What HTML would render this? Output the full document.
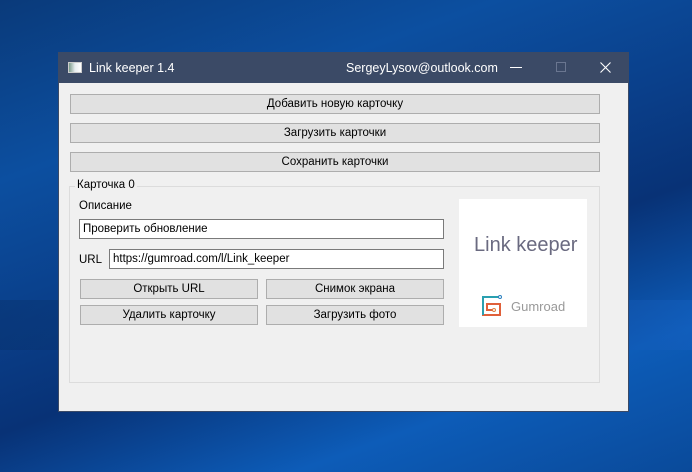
<!DOCTYPE html>
<html><head><meta charset="utf-8"><style>
*{margin:0;padding:0;box-sizing:border-box}
body{width:692px;height:472px;overflow:hidden;position:relative;font-family:"Liberation Sans",sans-serif;font-size:12px;color:#000;
background:linear-gradient(160deg,#0a3a7a 0%,#0c4fa0 25%,#0a3f8a 45%,#083276 60%,#0d5cb8 80%,#0a4a9a 100%);}
.ray{position:absolute;left:0;top:300px;width:692px;height:50px;background:linear-gradient(90deg,#08306a,#0a3f88 50%,#1660c0);opacity:.45}
.win{position:absolute;left:58px;top:52px;width:571px;height:360px;background:#f0f0f0;border:1px solid #3b4a66}
.tb{position:absolute;left:0;top:0;width:100%;height:30px;background:#3b4a66;color:#fff;font-size:12.5px}
.tb span{position:absolute;top:8px}
.b{position:absolute;background:#e1e1e1;border:1px solid #adadad;text-align:center;line-height:18px;font-size:11.5px}
.in{position:absolute;background:#fff;border:1px solid #7a7a7a;line-height:18px;padding-left:3px;font-size:11.5px}
.t{position:absolute;font-size:11.5px}
</style></head><body>
<div class="ray"></div>
<div class="win">
 <div class="tb">
  <div style="position:absolute;left:9px;top:9px;width:14px;height:11px;background:linear-gradient(90deg,#7a9a8a,#e8eef0 50%,#fff);border:1px solid #ccc"></div>
  <span style="left:30px">Link keeper 1.4</span>
  <span style="left:287px">SergeyLysov@outlook.com</span>
  <div style="position:absolute;left:451px;top:14px;width:12px;height:1px;background:#fff"></div>
  <div style="position:absolute;left:497px;top:9px;width:10px;height:10px;border:1px solid #6a7690"></div>
  <svg style="position:absolute;left:541px;top:9px" width="11" height="11" viewBox="0 0 11 11"><path d="M0.5 0.5L10.5 10.5M10.5 0.5L0.5 10.5" stroke="#fff" stroke-width="1.1"/></svg>
 </div>
 <div class="b" style="left:11px;top:41px;width:530px;height:20px">Добавить новую карточку</div>
 <div class="b" style="left:11px;top:70px;width:530px;height:20px">Загрузить карточки</div>
 <div class="b" style="left:11px;top:99px;width:530px;height:20px">Сохранить карточки</div>
 <div style="position:absolute;left:10px;top:133px;width:531px;height:197px;border:1px solid #dcdcdc"></div>
 <div class="t" style="left:16px;top:126px;background:#f0f0f0;padding:0 2px">Карточка 0</div>
 <div class="t" style="left:20px;top:147px">Описание</div>
 <div class="in" style="left:20px;top:166px;width:365px;height:20px">Проверить обновление</div>
 <div class="t" style="left:20px;top:201px">URL</div>
 <div class="in" style="left:50px;top:196px;width:335px;height:20px">https://gumroad.com/l/Link_keeper</div>
 <div class="b" style="left:21px;top:226px;width:178px;height:20px">Открыть URL</div>
 <div class="b" style="left:207px;top:226px;width:178px;height:20px">Снимок экрана</div>
 <div class="b" style="left:21px;top:252px;width:178px;height:20px">Удалить карточку</div>
 <div class="b" style="left:207px;top:252px;width:178px;height:20px">Загрузить фото</div>
 <div style="position:absolute;left:400px;top:146px;width:128px;height:128px;background:#fff">
  <div style="position:absolute;left:15px;top:35px;font-size:20px;color:#6a6a80">Link keeper</div>
  <svg style="position:absolute;left:22px;top:96px" width="22" height="22" viewBox="0 0 22 22"><path d="M19 2H2v18h17V9H6v6h7" fill="none" stroke="#e0603a" stroke-width="2"/><path d="M2 20V2h17" fill="none" stroke="#2aa0b0" stroke-width="2"/><circle cx="19" cy="2" r="1.5" fill="#fff" stroke="#2a80c0"/><circle cx="13" cy="15" r="1.5" fill="#fff" stroke="#e08040"/></svg>
  <div style="position:absolute;left:52px;top:100px;font-size:13px;color:#999">Gumroad</div>
 </div>
</div>
</body></html>
